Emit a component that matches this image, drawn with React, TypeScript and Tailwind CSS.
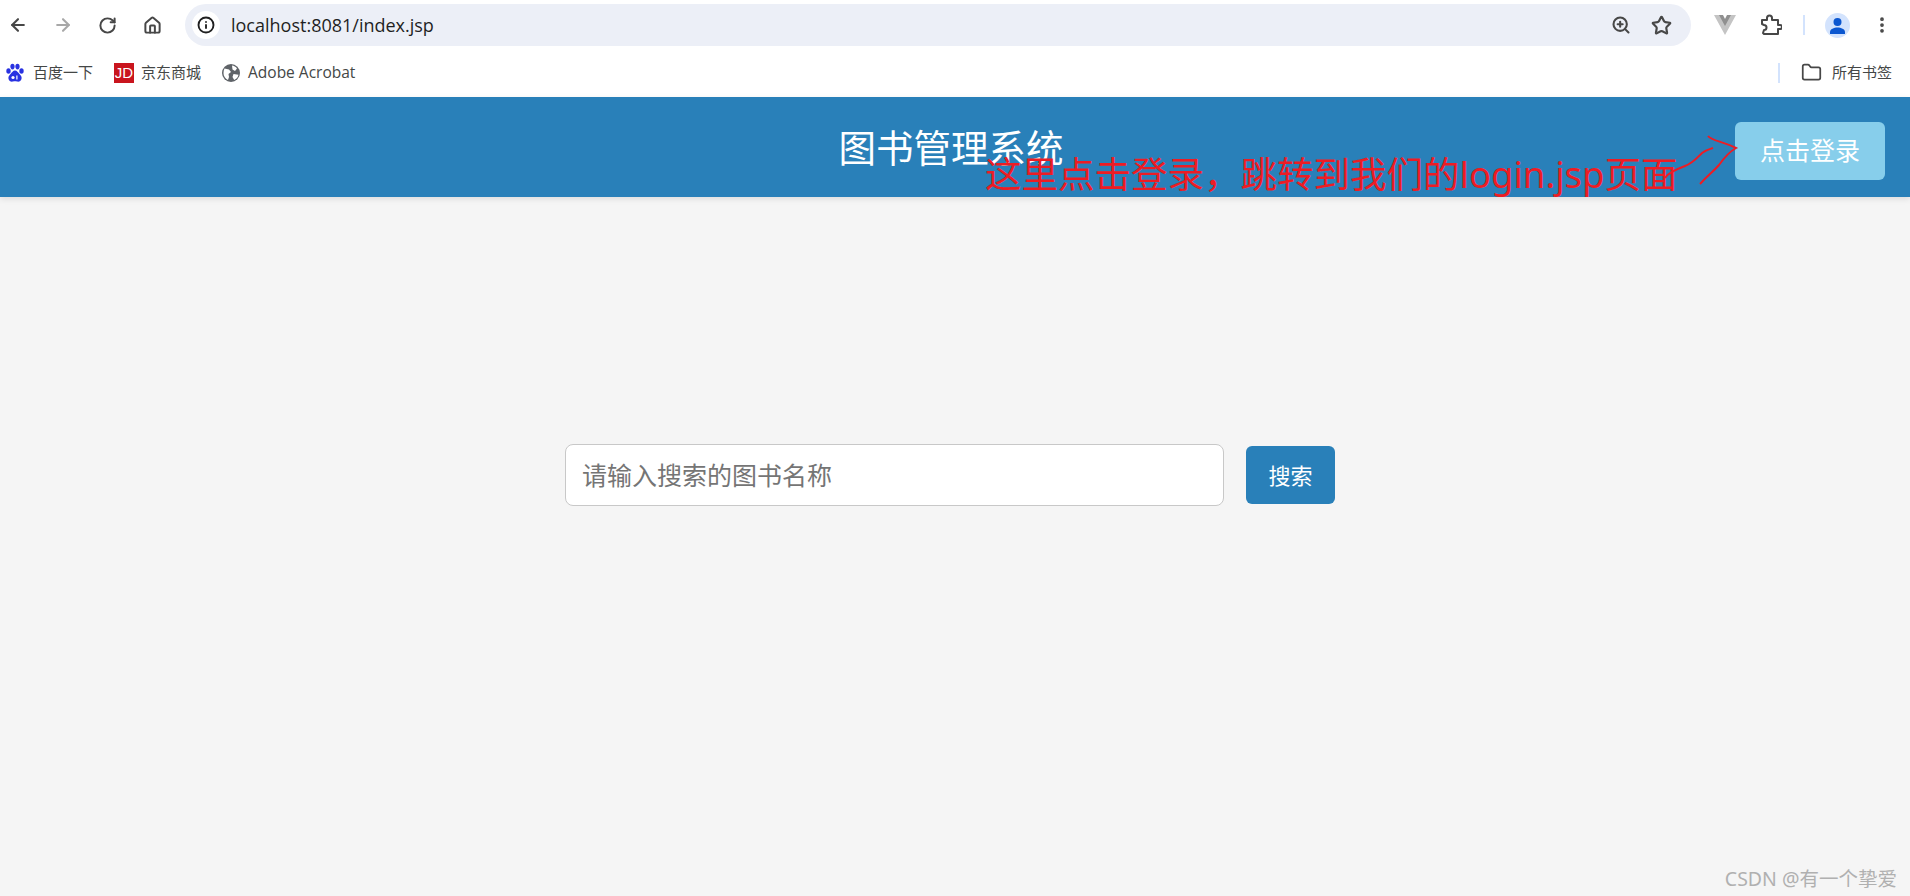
import React from 'react'
import { ArrowLeft, ArrowRight, RotateCw, House, Info, ZoomIn, Star, EllipsisVertical, Folder } from 'lucide-react'

const cjk = "font-['Noto_Sans','Noto_Sans_CJK_SC',sans-serif]"

const BaiduPaw = () => (
  <svg width="18" height="20" viewBox="0 0 18 20" fill="#2932e1">
    <ellipse cx="2.5" cy="8" rx="2.2" ry="2.8" />
    <ellipse cx="6.5" cy="3.6" rx="2.1" ry="2.8" />
    <ellipse cx="11.5" cy="3.6" rx="2.1" ry="2.8" />
    <ellipse cx="15.5" cy="8" rx="2.2" ry="2.8" />
    <path d="M9 7.5c-2 0-3 2-4.500 3.500-1.500 1.500-2.500 3-2 5 .5 2 2.500 3 4.500 2.500 1.300-.3 2.700-.3 4 0 2 .5 4-.5 4.500-2.500.5-2-.5-3.500-2-5C12 9.500 11 7.500 9 7.500z" />
    <circle cx="7" cy="14.500" r="1.600" fill="#fff" />
    <rect x="10.300" y="12.500" width="1.200" height="4" fill="#fff" />
  </svg>
)

const GlobeIcon = () => (
  <svg width="18" height="18" viewBox="0 0 18 18">
    <circle cx="9" cy="9" r="9" fill="#5f6368" />
    <path d="M2.500 4.500 7 5.500l2 2.500-2.500 2 .5 3-1 3C3 14.500 1.500 12 1.500 9c0-1.700.4-3.200 1-4.500zM10 1.600c2 .3 3.800 1.300 5 2.800l-2 2.600-2.500-1.500zM11.500 10l5 .8c-.5 2.300-2 4.300-4.300 5.300L10.500 13z" fill="#fff" />
  </svg>
)

const VueShield = () => (
  <svg width="22" height="20" viewBox="0 0 22 20">
    <path d="M0 0h6l5 9 5-9h6L11 20z" fill="#c4c4c4" />
    <path d="M5 0h4l2 4 2-4h4l-6 11z" fill="#8f8f8f" />
  </svg>
)

const PuzzleIcon = () => (
  <svg width="22" height="22" viewBox="0 0 22 22" fill="none" stroke="#474747" strokeWidth="2" strokeLinejoin="round">
    <path d="M2 6h5V4a2.500 2.500 0 0 1 5 0v2h6v5h2a2 2 0 0 1 0 4h-2v5H4l-1-1 1-3a2.500 2.500 0 0 0 0-5L2 10z" />
  </svg>
)

const Avatar = () => (
  <div className="w-[25px] h-[25px] rounded-full bg-[#d3e3fd] flex items-center justify-center overflow-hidden">
    <svg width="17" height="17" viewBox="0 0 17 17" fill="#0b57d0">
      <circle cx="8.500" cy="5" r="4" />
      <path d="M1 17v-2c0-3 4-4.500 7.500-4.500S16 12 16 15v2z" />
    </svg>
  </div>
)

const Bookmark = ({ icon, label, className }: { icon: React.ReactNode; label: string; className: string }) => (
  <div className={`flex items-center ${className}`}>
    {icon}
    <span className="text-[#444746]">{label}</span>
  </div>
)

const BrowserChrome = () => (
  <div className="bg-white h-[97px] shrink-0">
    <div className="h-[50px] flex items-center pl-[8px]">
      <ArrowLeft size={20} color="#474747" strokeWidth={2.500} />
      <ArrowRight size={20} color="#a8a8a8" strokeWidth={2.500} className="ml-[25px]" />
      <RotateCw size={19} color="#474747" strokeWidth={2.500} className="ml-[25px]" />
      <House size={19} color="#474747" strokeWidth={2.500} className="ml-[26px]" />
      <div className="ml-[23px] w-[1506px] h-[42px] rounded-full bg-[#eceff7] flex items-center pl-[7px] pr-[19px]">
        <div className="w-[28px] h-[28px] rounded-full bg-white flex items-center justify-center">
          <Info size={18} color="#1f1f1f" strokeWidth={2.500} />
        </div>
        <span className="ml-[11px] text-[18px] text-[#1f1f1f] font-['Open_Sans',sans-serif]">localhost:8081/index.jsp</span>
        <div className="ml-auto flex items-center gap-[20px]">
          <ZoomIn size={20} color="#474747" strokeWidth={2.500} />
          <Star size={21} color="#474747" strokeWidth={2.500} />
        </div>
      </div>
      <div className="ml-[23px]"><VueShield /></div>
      <div className="ml-[24px]"><PuzzleIcon /></div>
      <div className="ml-[21px] w-[2px] h-[20px] bg-[#d3e3fd]" />
      <div className="ml-[20px]"><Avatar /></div>
      <EllipsisVertical size={20} color="#474747" strokeWidth={2.500} className="ml-[22px]" />
    </div>
    <div className={`h-[45px] flex items-center text-[15px] ${cjk}`}>
      <Bookmark className="ml-[6px] gap-[9px]" icon={<BaiduPaw />} label="百度一下" />
      <Bookmark
        className="ml-[21px] gap-[7px]"
        icon={
          <span className="w-[20px] h-[20px] bg-[#c9151e] text-white text-[15px] leading-[20px] text-center font-['Liberation_Sans',sans-serif]">JD</span>
        }
        label="京东商城"
      />
      <Bookmark
        className="ml-[21px] gap-[8px] font-['Open_Sans',sans-serif] text-[15.500px]"
        icon={<GlobeIcon />}
        label="Adobe Acrobat"
      />
      <div className="ml-auto w-[2px] h-[20px] bg-[#d3e3fd]" />
      <Folder size={21} color="#474747" strokeWidth={2} className="ml-[21px]" />
      <span className="ml-[10px] mr-[18px] text-[#444746]">所有书签</span>
    </div>
  </div>
)

export default function App() {
  return (
    <div className={`relative h-screen overflow-hidden flex flex-col bg-[#f5f5f5] ${cjk}`}>
      <BrowserChrome />

      <header className="h-[100px] shrink-0 bg-[#2980b9] flex items-center justify-center relative shadow-[0_2px_6px_rgba(0,0,0,0.1)]">
        <h1 className="text-[37.500px] font-normal text-white mr-[8px] mb-[-2px]">图书管理系统</h1>
        <button className="absolute right-[25px] top-[25px] w-[150px] h-[58px] rounded-[6px] bg-[#87ceeb] text-white text-[25px]">
          点击登录
        </button>
      </header>

      <main className="flex-1 flex items-start pl-[565px] pt-[247px]">
        <input
          placeholder="请输入搜索的图书名称"
          className="w-[659px] h-[62px] px-[16px] rounded-[8px] border border-[#c8c8c8] bg-white text-[25px] placeholder:text-[#757575] outline-none"
        />
        <button className="ml-[22px] mt-[2px] w-[89px] h-[58px] rounded-[6px] bg-[#2980b9] text-white text-[22px]">
          搜索
        </button>
      </main>

      {/* red note drawn over the screenshot */}
      <div className="absolute left-[985px] top-[149px] text-[36.500px] leading-[50px] text-[#ed1c24] whitespace-nowrap">
        这里点击登录，跳转到我们的login.jsp页面
      </div>
      <svg className="absolute left-[1660px] top-[130px]" width="85" height="60" viewBox="0 0 85 60" fill="none" stroke="#ed1c24" strokeWidth="2">
        <path d="M5 48c2-4 12-9 20-12 8-3 12-8 17-13 4-3 8-4 11-5" />
        <path d="M48 6c4 5 14 5 28 12-7 4-12 10-17 17-6 7-11 10-19 19" />
      </svg>

      <div className="absolute right-[13px] bottom-[3px] text-[19.500px] text-[#b0b0b0]">CSDN @有一个挚爱</div>
    </div>
  )
}
